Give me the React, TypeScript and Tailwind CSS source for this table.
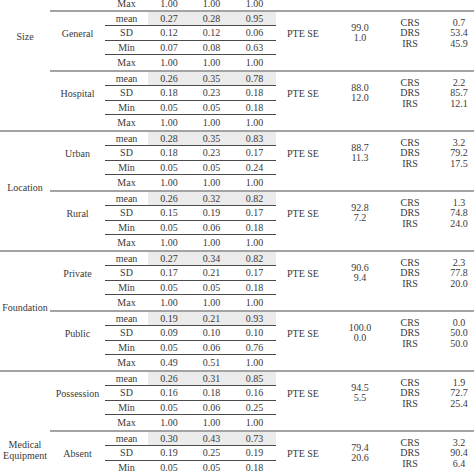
import React from 'react'

type Group = {
  name: string
  rows: [string, string, string, string][]
  pte: [string, string]
  rs: [string, string, string]
}

type Category = {
  label: string[]
  labelPad: string
  groups: Group[]
  partial?: [string, string, string, string]
}

const stat = (
  m: string[],
  sd: string[],
  mn: string[],
  mx: string[],
): [string, string, string, string][] => [
  ['mean', m[0], m[1], m[2]],
  ['SD', sd[0], sd[1], sd[2]],
  ['Min', mn[0], mn[1], mn[2]],
  ['Max', mx[0], mx[1], mx[2]],
]

const ones = ['1.00', '1.00', '1.00']

const categories: Category[] = [
  {
    label: ['Size'],
    labelPad: 'pt-[33px]',
    partial: ['Max', '1.00', '1.00', '1.00'],
    groups: [
      {
        name: 'General',
        rows: stat(['0.27', '0.28', '0.95'], ['0.12', '0.12', '0.06'], ['0.07', '0.08', '0.63'], ones),
        pte: ['99.0', '1.0'],
        rs: ['0.7', '53.4', '45.9'],
      },
      {
        name: 'Hospital',
        rows: stat(['0.26', '0.35', '0.78'], ['0.18', '0.23', '0.18'], ['0.05', '0.05', '0.18'], ones),
        pte: ['88.0', '12.0'],
        rs: ['2.2', '85.7', '12.1'],
      },
    ],
  },
  {
    label: ['Location'],
    labelPad: 'pt-[50px]',
    groups: [
      {
        name: 'Urban',
        rows: stat(['0.28', '0.35', '0.83'], ['0.18', '0.23', '0.17'], ['0.05', '0.05', '0.24'], ones),
        pte: ['88.7', '11.3'],
        rs: ['3.2', '79.2', '17.5'],
      },
      {
        name: 'Rural',
        rows: stat(['0.26', '0.32', '0.82'], ['0.15', '0.19', '0.17'], ['0.05', '0.06', '0.18'], ones),
        pte: ['92.8', '7.2'],
        rs: ['1.3', '74.8', '24.0'],
      },
    ],
  },
  {
    label: ['Foundation'],
    labelPad: 'pt-[50px]',
    groups: [
      {
        name: 'Private',
        rows: stat(['0.27', '0.34', '0.82'], ['0.17', '0.21', '0.17'], ['0.05', '0.05', '0.18'], ones),
        pte: ['90.6', '9.4'],
        rs: ['2.3', '77.8', '20.0'],
      },
      {
        name: 'Public',
        rows: stat(['0.19', '0.21', '0.93'], ['0.09', '0.10', '0.10'], ['0.05', '0.06', '0.76'], ['0.49', '0.51', '1.00']),
        pte: ['100.0', '0.0'],
        rs: ['0.0', '50.0', '50.0'],
      },
    ],
  },
  {
    label: ['Medical', 'Equipment'],
    labelPad: 'pt-[67px]',
    groups: [
      {
        name: 'Possession',
        rows: stat(['0.26', '0.31', '0.85'], ['0.16', '0.18', '0.16'], ['0.05', '0.06', '0.25'], ones),
        pte: ['94.5', '5.5'],
        rs: ['1.9', '72.7', '25.4'],
      },
      {
        name: 'Absent',
        rows: stat(['0.30', '0.43', '0.73'], ['0.19', '0.25', '0.19'], ['0.05', '0.05', '0.18'], ones),
        pte: ['79.4', '20.6'],
        rs: ['3.2', '90.4', '6.4'],
      },
    ],
  },
]

const gridCols = 'grid grid-cols-[55px_43px_42px_43px_43px_54px_60px_40px_44px]'

function StatRow({ row, idx }: { row: [string, string, string, string]; idx: number }) {
  const line = idx < 3 ? 'border-b border-[#4a4a4a]' : ''
  const shade = idx === 0 ? 'bg-[#ebebeb]' : ''
  return (
    <>
      <div
        className={`col-start-2 flex items-center justify-center ${line}`}
        style={{ gridRowStart: idx + 1 }}
      >
        {row[0]}
      </div>
      {row.slice(1).map((v, i) => (
        <div
          key={i}
          className={`flex items-center justify-center ${line} ${shade}`}
          style={{ gridRowStart: idx + 1, gridColumnStart: i + 3 }}
        >
          {v}
        </div>
      ))}
    </>
  )
}

function GroupBlock({ group, border }: { group: Group; border: boolean }) {
  return (
    <div className={border ? 'border-t-2 border-[#a3a3a3]' : ''}>
      <div className={`${gridCols} grid-rows-[14.5px_14.5px_14.5px_14.5px]`}>
        <div className="col-start-1 row-start-1 row-span-3 flex items-center justify-center">
          {group.name}
        </div>
        {group.rows.map((r, i) => (
          <StatRow key={i} row={r} idx={i} />
        ))}
        <div className="col-start-6 row-start-1 row-span-3 flex items-center justify-center">
          PTE SE
        </div>
        <div className="col-start-7 row-start-1 row-span-3 flex flex-col items-center justify-center leading-[10.5px]">
          <span>{group.pte[0]}</span>
          <span>{group.pte[1]}</span>
        </div>
        <div className="col-start-8 row-start-1 row-span-3 flex flex-col items-center justify-center leading-[10.5px]">
          <span>CRS</span>
          <span>DRS</span>
          <span>IRS</span>
        </div>
        <div className="col-start-9 row-start-1 row-span-3 flex flex-col items-center justify-center pl-[14px] leading-[10.5px]">
          {group.rs.map((v, i) => (
            <span key={i}>{v}</span>
          ))}
        </div>
      </div>
    </div>
  )
}

function PartialRow({ row }: { row: [string, string, string, string] }) {
  return (
    <div className={`${gridCols} grid-rows-[11.5px]`}>
      <div className="col-start-2 flex items-center justify-center">{row[0]}</div>
      {row.slice(1).map((v, i) => (
        <div key={i} className="flex items-center justify-center">
          {v}
        </div>
      ))}
    </div>
  )
}

export default function App() {
  return (
    <div className="w-[474px] h-[474px] overflow-hidden bg-white font-['Liberation_Serif',serif] text-[10px] text-[#3a3a3a]">
      <div className="-mt-[2px]">
        {categories.map((cat, ci) => (
          <div key={ci} className={`flex ${ci > 0 ? 'border-t-2 border-[#a3a3a3]' : ''}`}>
            <div className={`w-[50px] shrink-0 flex flex-col items-center leading-[11px] whitespace-nowrap ${cat.labelPad}`}>
              {cat.label.map((l, i) => (
                <span key={i}>{l}</span>
              ))}
            </div>
            <div className="flex-1">
              {cat.partial && <PartialRow row={cat.partial} />}
              {cat.groups.map((g, gi) => (
                <GroupBlock key={gi} group={g} border={gi > 0 || !!cat.partial} />
              ))}
            </div>
          </div>
        ))}
      </div>
    </div>
  )
}
